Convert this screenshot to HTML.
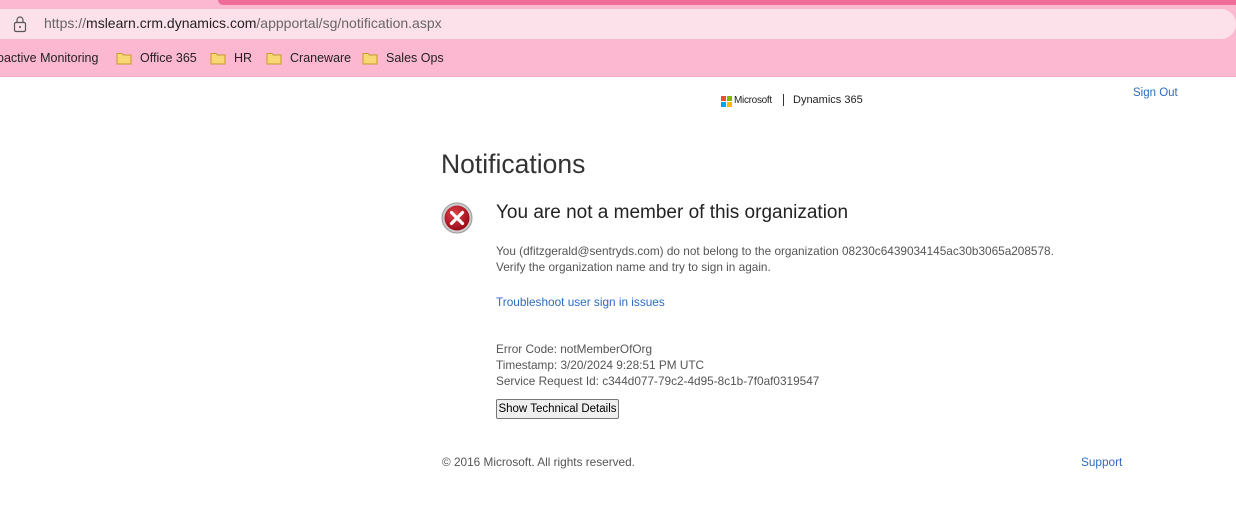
<!DOCTYPE html>
<html><head><meta charset="utf-8"><style>
*{margin:0;padding:0;box-sizing:border-box}
body{width:1236px;height:515px;background:#fff;font-family:"Liberation Sans",sans-serif;position:relative;overflow:hidden}
.a{position:absolute;white-space:nowrap}
</style></head><body>
<div class="a" style="left:0;top:0;width:1236px;height:77px;background:#fcb8d0;border-bottom:1px solid #f4a9c2"></div>
<div class="a" style="left:218px;top:0;width:1018px;height:5px;background:#f06c98;border-radius:0 0 0 6px"></div>
<div class="a" style="left:0;top:9px;width:1236px;height:30px;background:#fde1ea;border-radius:0 15px 15px 0"></div>
<svg class="a" style="left:12px;top:15px" width="16" height="18" viewBox="0 0 16 18"><rect x="2.5" y="7.5" width="11" height="9" rx="1.5" fill="none" stroke="#555" stroke-width="1.2"/><path d="M5 7.5V5a3 3 0 0 1 6 0v2.5" fill="none" stroke="#555" stroke-width="1.2"/><circle cx="8" cy="12" r="1" fill="#555"/></svg>
<div class="a" style="left:44px;top:15px;font-size:14px;color:#666">https://<span style="color:#222">mslearn.crm.dynamics.com</span>/appportal/sg/notification.aspx</div>
<div class="a" style="left:-3px;top:51px;font-size:12.5px;color:#222">oactive Monitoring</div>
<svg class="a" style="left:116px;top:51px" width="16" height="14"><path d="M1 2.5h5l1.5 1.5H15v9H1z" fill="#f8d775" stroke="#c79a2e"/></svg>
<div class="a" style="left:140px;top:51px;font-size:12.5px;color:#222">Office 365</div>
<svg class="a" style="left:210px;top:51px" width="16" height="14"><path d="M1 2.5h5l1.5 1.5H15v9H1z" fill="#f8d775" stroke="#c79a2e"/></svg>
<div class="a" style="left:234px;top:51px;font-size:12.5px;color:#222">HR</div>
<svg class="a" style="left:266px;top:51px" width="16" height="14"><path d="M1 2.5h5l1.5 1.5H15v9H1z" fill="#f8d775" stroke="#c79a2e"/></svg>
<div class="a" style="left:290px;top:51px;font-size:12.5px;color:#222">Craneware</div>
<svg class="a" style="left:362px;top:51px" width="16" height="14"><path d="M1 2.5h5l1.5 1.5H15v9H1z" fill="#f8d775" stroke="#c79a2e"/></svg>
<div class="a" style="left:386px;top:51px;font-size:12.5px;color:#222">Sales Ops</div>

<svg class="a" style="left:721px;top:96px" width="11" height="11"><rect width="5" height="5" fill="#f25022"/><rect x="6" width="5" height="5" fill="#7fba00"/><rect y="6" width="5" height="5" fill="#00a4ef"/><rect x="6" y="6" width="5" height="5" fill="#ffb900"/></svg>
<div class="a" style="left:734px;top:95px;font-size:10px;color:#222;letter-spacing:-0.3px">Microsoft</div>
<div class="a" style="left:783px;top:94px;width:1px;height:12px;background:#333"></div>
<div class="a" style="left:793px;top:94px;font-size:11px;color:#222">Dynamics 365</div>
<div class="a" style="left:1133px;top:87px;font-size:11.5px;color:#2b6cc4">Sign Out</div>

<div class="a" style="left:441px;top:149px;font-size:26.5px;color:#333;font-weight:300">Notifications</div>
<svg class="a" style="left:441px;top:202px" width="32" height="32" viewBox="0 0 32 32"><defs><radialGradient id="g" cx="40%" cy="35%" r="65%"><stop offset="0" stop-color="#e0404a"/><stop offset="1" stop-color="#9a0c18"/></radialGradient></defs><circle cx="16" cy="16" r="15" fill="#ccc" stroke="#999"/><circle cx="16" cy="16" r="12.5" fill="url(#g)"/><path d="M10.5 10.5l11 11M21.5 10.5l-11 11" stroke="#fff" stroke-width="3.2" stroke-linecap="round"/></svg>
<div class="a" style="left:496px;top:202px;font-size:19px;color:#222">You are not a member of this organization</div>
<div class="a" style="left:496px;top:243px;font-size:11.8px;color:#555;line-height:16px">You (dfitzgerald@sentryds.com) do not belong to the organization 08230c6439034145ac30b3065a208578.<br>Verify the organization name and try to sign in again.</div>
<div class="a" style="left:496px;top:295px;font-size:11.8px;color:#2b6cc4">Troubleshoot user sign in issues</div>
<div class="a" style="left:496px;top:341px;font-size:11.8px;color:#555;line-height:16px">Error Code: notMemberOfOrg<br>Timestamp: 3/20/2024 9:28:51 PM UTC<br>Service Request Id: c344d077-79c2-4d95-8c1b-7f0af0319547</div>
<div class="a" style="left:496px;top:399px;width:123px;height:20px;border:1px solid #767676;border-radius:2px;background:#efefef;font-size:11.5px;color:#000;text-align:center;line-height:18px">Show Technical Details</div>
<div class="a" style="left:442px;top:455px;font-size:11.8px;color:#555">© 2016 Microsoft. All rights reserved.</div>
<div class="a" style="left:1081px;top:455px;font-size:11.8px;color:#2b6cc4">Support</div>
</body></html>
